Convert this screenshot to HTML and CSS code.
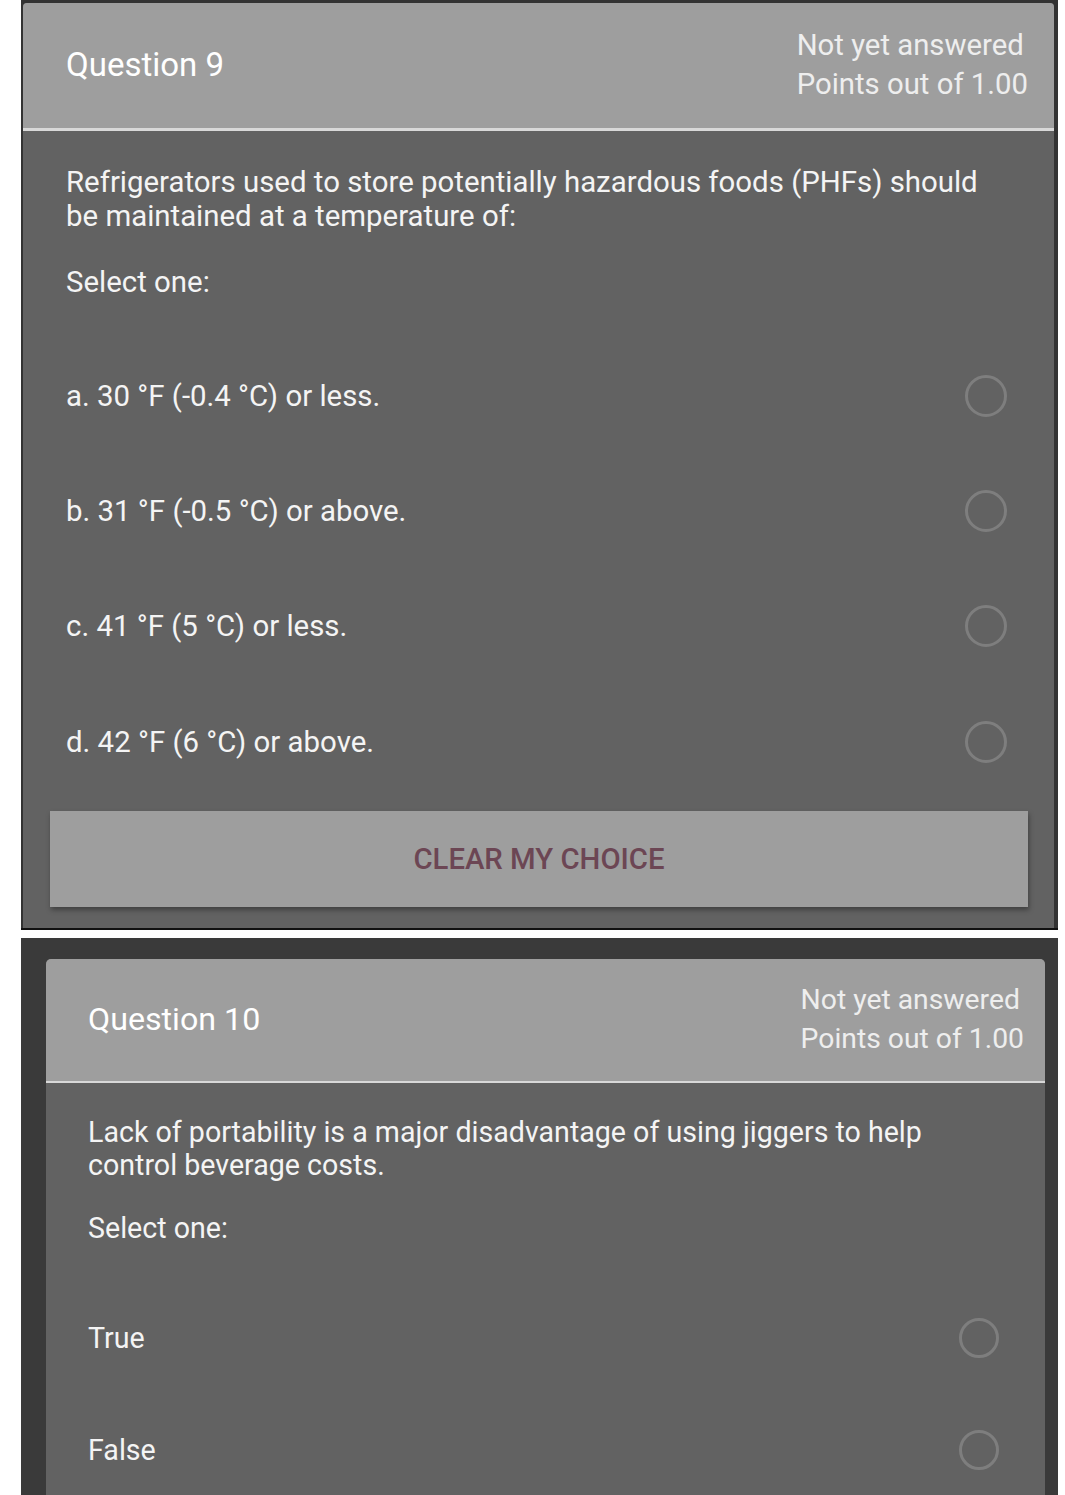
FILE: index.html
```html
<!DOCTYPE html>
<html>
<head>
<meta charset="utf-8">
<link rel="stylesheet" href="styles.css">
</head>
<body>
<div class="shot shot-one">
  <div class="card">
    <div class="card-head">
      <div class="q-title">Question 9</div>
      <div class="q-info">
        <div>Not yet answered</div>
        <div>Points out of 1.00</div>
      </div>
    </div>
    <div class="card-body">
      <div class="q-text">Refrigerators used to store potentially hazardous foods (PHFs) should be maintained at a temperature of:</div>
      <div class="prompt">Select one:</div>
      <div class="options">
        <div class="option"><span>a. 30 °F (-0.4 °C) or less.</span><span class="radio"></span></div>
        <div class="option"><span>b. 31 °F (-0.5 °C) or above.</span><span class="radio"></span></div>
        <div class="option"><span>c. 41 °F (5 °C) or less.</span><span class="radio"></span></div>
        <div class="option"><span>d. 42 °F (6 °C) or above.</span><span class="radio"></span></div>
      </div>
      <div class="clear-btn">CLEAR MY CHOICE</div>
    </div>
  </div>
</div>
<div class="shot shot-two">
  <div class="card">
    <div class="card-head">
      <div class="q-title">Question 10</div>
      <div class="q-info">
        <div>Not yet answered</div>
        <div>Points out of 1.00</div>
      </div>
    </div>
    <div class="card-body">
      <div class="q-text">Lack of portability is a major disadvantage of using jiggers to help control beverage costs.</div>
      <div class="prompt">Select one:</div>
      <div class="options">
        <div class="option"><span>True</span><span class="radio"></span></div>
        <div class="option"><span>False</span><span class="radio"></span></div>
      </div>
    </div>
  </div>
</div>
</body>
</html>
```
FILE: styles.css
```css
html, body {
  margin: 0;
  padding: 0;
  background: #ffffff;
  font-family: Roboto, "Noto Sans", Arial, sans-serif;
}

.shot {
  margin-left: 21px;
  width: 1037px;
  box-sizing: border-box;
  overflow: hidden;
}

/* ---------- first screenshot ---------- */
.shot-one {
  background: #333333;
  padding: 3px 4px 0 2px;
  border-bottom: 2px solid #111111;
  height: 930px;
}

.shot-one .card {
  background: #626262;
  height: 925px;
  border-top-left-radius: 4px;
  border-top-right-radius: 4px;
  overflow: hidden;
}

.card-head {
  background: #9e9e9e;
  display: flex;
  align-items: center;
  justify-content: space-between;
  box-sizing: border-box;
}

.shot-one .card-head {
  height: 128px;
  padding: 0 26px 2px 43px;
  border-bottom: 3px solid #d8d8d8;
}

.q-title {
  color: #ffffff;
  font-size: 33px;
}

.q-info {
  color: #eeeeee;
  font-size: 29.3px;
  line-height: 39px;
}

.card-body {
  color: #f4f4f4;
}

.shot-one .card-body {
  padding: 34px 26px 0 27px;
}

.shot-one .q-text,
.shot-one .prompt,
.shot-one .option {
  padding-left: 16px;
  font-size: 29.4px;
  line-height: 34px;
}

.shot-one .q-text {
  padding-right: 40px;
}

.shot-one .prompt {
  margin-top: 32px;
}

.shot-one .options {
  margin-top: 39px;
}

.option {
  display: flex;
  align-items: center;
  justify-content: space-between;
}

.shot-one .option {
  height: 115.4px;
  padding-right: 21px;
}

.radio {
  box-sizing: border-box;
  border-radius: 50%;
  border: 3px solid #7e7e7e;
}

.shot-one .radio {
  width: 42px;
  height: 42px;
}

.clear-btn {
  margin-top: 11px;
  height: 96px;
  background: #9e9e9e;
  color: #6c4654;
  font-size: 29.3px;
  font-weight: 500;
  display: flex;
  align-items: center;
  justify-content: center;
  box-shadow: 1px 3px 5px rgba(0, 0, 0, 0.35);
}

/* ---------- second screenshot ---------- */
.shot-two {
  margin-top: 8px;
  background: #3a3a3a;
  padding: 21px 13px 0 25px;
  height: 557px;
}

.shot-two .card {
  background: #626262;
  height: 600px;
  border-top-left-radius: 5px;
  border-top-right-radius: 5px;
  overflow: hidden;
}

.shot-two .card-head {
  height: 124px;
  padding: 0 21px 2px 42px;
  border-bottom: 2px solid #d8d8d8;
}

.shot-two .q-title {
  font-size: 32.2px;
}

.shot-two .q-info {
  font-size: 28.3px;
  line-height: 39px;
}

.shot-two .card-body {
  padding: 33px 0 0 42px;
}

.shot-two .q-text,
.shot-two .prompt,
.shot-two .option {
  font-size: 28.6px;
  line-height: 33px;
}

.shot-two .q-text {
  padding-right: 90px;
}

.shot-two .prompt {
  margin-top: 30px;
}

.shot-two .options {
  margin-top: 37px;
}

.shot-two .option {
  height: 112px;
  padding-right: 46px;
}

.shot-two .radio {
  width: 40px;
  height: 40px;
}
```
